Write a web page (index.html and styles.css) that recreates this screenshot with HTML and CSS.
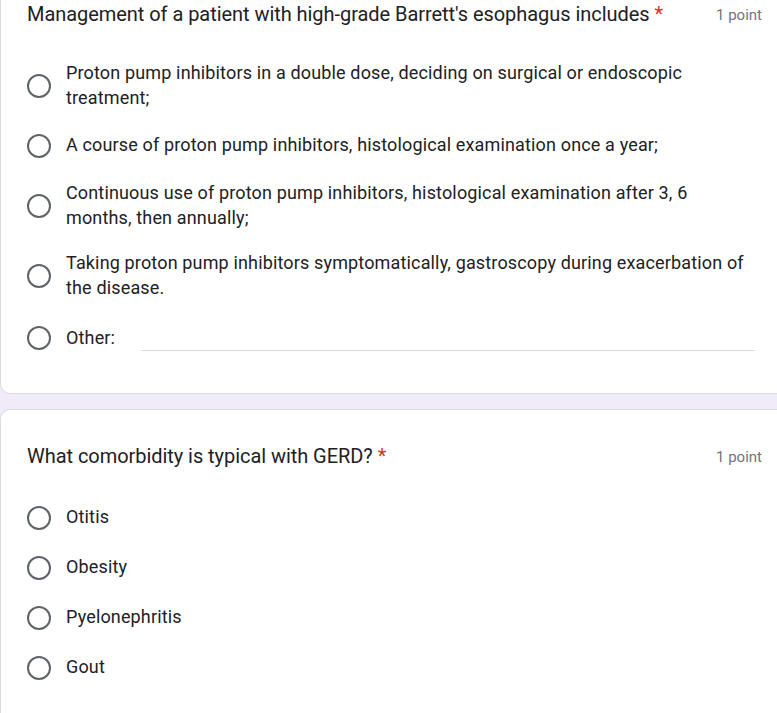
FILE: index.html
```html
<!DOCTYPE html>
<html>
<head>
<meta charset="utf-8">
<link rel="stylesheet" href="styles.css">
</head>
<body>
<div class="card card-first">
  <div class="q-head">
    <div class="q-title">Management of a patient with high-grade Barrett's esophagus includes <span class="req">*</span></div>
    <div class="points">1 point</div>
  </div>
  <div class="options">
    <div class="opt"><span class="radio"></span><span class="label">Proton pump inhibitors in a double dose, deciding on surgical or endoscopic treatment;</span></div>
    <div class="opt"><span class="radio"></span><span class="label">A course of proton pump inhibitors, histological examination once a year;</span></div>
    <div class="opt"><span class="radio"></span><span class="label">Continuous use of proton pump inhibitors, histological examination after 3, 6 months, then annually;</span></div>
    <div class="opt"><span class="radio"></span><span class="label">Taking proton pump inhibitors symptomatically, gastroscopy during exacerbation of the disease.</span></div>
    <div class="opt opt-other"><span class="radio"></span><span class="label">Other:</span><span class="other-input"></span></div>
  </div>
</div>
<div class="card card-second">
  <div class="q-head">
    <div class="q-title">What comorbidity is typical with GERD? <span class="req">*</span></div>
    <div class="points">1 point</div>
  </div>
  <div class="options">
    <div class="opt"><span class="radio"></span><span class="label">Otitis</span></div>
    <div class="opt"><span class="radio"></span><span class="label">Obesity</span></div>
    <div class="opt"><span class="radio"></span><span class="label">Pyelonephritis</span></div>
    <div class="opt"><span class="radio"></span><span class="label">Gout</span></div>
  </div>
</div>
</body>
</html>
```
FILE: styles.css
```css
html, body {
  margin: 0;
  padding: 0;
}
body {
  background: #f0ebf8;
  font-family: Roboto, "Liberation Sans", Arial, sans-serif;
  color: #202124;
  overflow: hidden;
  height: 713px;
  display: flex;
  flex-direction: column;
}
.card {
  background: #fff;
  border: 1px solid #dadce0;
  margin-right: -20px;
  padding-left: 26px;
  padding-right: 34px;
}
.card-first {
  flex: none;
  border-top: none;
  border-radius: 0 0 10px 10px;
  padding-top: 0;
  padding-bottom: 31px;
}
.card-second {
  flex: 1 1 auto;
  min-height: 0;
  overflow: hidden;
  margin-top: 15px;
  border-bottom: none;
  border-radius: 10px 10px 0 0;
  padding-top: 32px;
  padding-bottom: 0;
}
.q-head {
  display: flex;
  justify-content: space-between;
  align-items: center;
  height: 28px;
}
.q-title {
  font-size: 20px;
  line-height: 28px;
  letter-spacing: -0.05px;
}
.req {
  color: #d93025;
}
.points {
  font-size: 15px;
  color: #70757a;
  line-height: 28px;
  padding-top: 2px;
}
.options {
  margin-top: 21.5px;
  display: flex;
  flex-direction: column;
}
.opt {
  display: flex;
  align-items: center;
  min-height: 30px;
  padding: 10px 0;
  font-size: 18px;
  line-height: 25px;
}
.radio {
  flex: none;
  width: 20px;
  height: 20px;
  border: 2.5px solid #5f6368;
  border-radius: 50%;
  margin-right: 15px;
  margin-top: 2px;
}
.label {
  max-width: 684px;
  letter-spacing: 0.15px;
}
.opt-other {
  padding-top: 12.5px;
}
.other-input {
  flex: none;
  width: 614px;
  height: 28px;
  margin-left: 26px;
  border-bottom: 1px solid #dadce0;
  align-self: flex-start;
}
```
